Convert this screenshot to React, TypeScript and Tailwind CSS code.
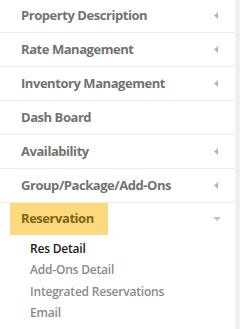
import React from "react";

const items: { label: string; caret: boolean }[] = [
  { label: "Property Description", caret: true },
  { label: "Rate Management", caret: true },
  { label: "Inventory Management", caret: true },
  { label: "Dash Board", caret: false },
  { label: "Availability", caret: true },
  { label: "Group/Package/Add-Ons", caret: true },
];

const subs = [
  { label: "Res Detail", active: true },
  { label: "Add-Ons Detail", active: false },
  { label: "Integrated Reservations", active: false },
  { label: "Email", active: false },
];

function CaretLeft() {
  return (
    <svg width="4" height="7" viewBox="0 0 4 7" className="block">
      <polygon points="4,0 4,7 0,3.5" fill="#b5b5b5" />
    </svg>
  );
}

function CaretDown() {
  return (
    <svg width="8" height="4" viewBox="0 0 8 4" className="block">
      <polygon points="0,0 8,0 4,4" fill="#c4c4c4" />
    </svg>
  );
}

export default function App() {
  return (
    <div
      className="w-[240px] h-[329px] bg-white flex overflow-hidden"
      style={{ fontFamily: '"Open Sans", "Noto Sans", sans-serif' }}
    >
      <div className="w-[235px] flex flex-col">
        <div className="-mt-px">
          {items.map((it) => (
            <div
              key={it.label}
              className="h-[34px] border-b border-[#ececec] flex items-center pl-[21px] pr-[17px]"
            >
              <span className="flex-1 text-[13px] font-bold text-[#727272] tracking-[-0.45px]">
                {it.label}
              </span>
              {it.caret && <CaretLeft />}
            </div>
          ))}
        </div>
        <div className="h-[32px] flex items-center pl-[10px] pr-[14px]">
          <div className="h-[32px] w-[98px] bg-[#fdd97c] flex items-center pl-[11px]">
            <span className="text-[13px] font-bold text-[#7d6418] tracking-[-0.45px]">
              Reservation
            </span>
          </div>
          <div className="flex-1" />
          <CaretDown />
        </div>
        <div className="flex flex-col pl-[30px] pt-[3px]">
          {subs.map((s) => (
            <div
              key={s.label}
              className={`h-[21.5px] flex items-center text-[12px] font-semibold tracking-[-0.2px] ${
                s.active ? "text-[#1a1a1a]" : "text-[#8a8a8a]"
              }`}
            >
              {s.label}
            </div>
          ))}
        </div>
      </div>
      <div className="w-[5px] h-full bg-[#f1f1f1]" />
    </div>
  );
}
